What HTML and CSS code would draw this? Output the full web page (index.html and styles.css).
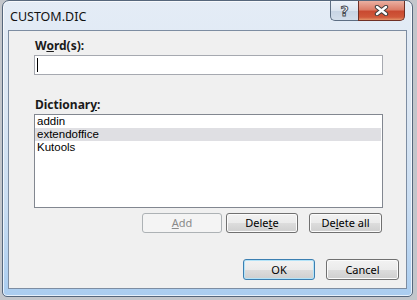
FILE: index.html
```html
<!DOCTYPE html>
<html lang="en">
  <head>
    <meta charset="UTF-8" />
    <title>CUSTOM.DIC</title>
    <link rel="stylesheet" href="styles.css">
  </head>
  <body>
    <div class="window">
      <div class="titlebar">
        <span class="title">CUSTOM.DIC</span>
        <div class="caption">
          <div class="cap help">?</div>
          <div class="cap close">
            <svg width="15" height="11" viewBox="0 0 15 11">
              <path d="M3 2 L12 9 M12 2 L3 9" stroke="#3d3d3d" stroke-width="4.4" stroke-linecap="round" fill="none" />
              <path d="M3 2 L12 9 M12 2 L3 9" stroke="#ffffff" stroke-width="2.4" stroke-linecap="round" fill="none" />
            </svg>
          </div>
        </div>
      </div>
      <div class="panel">
        <div class="label">W<u>o</u>rd(s):</div>
        <div class="textbox"><span class="caret"></span></div>

        <div class="label dict">Dictionar<u>y</u>:</div>
        <ul class="listbox">
          <li>addin</li>
          <li class="selected">extendoffice</li>
          <li>Kutools</li>
        </ul>

        <div class="edit-buttons">
          <div class="btn disabled add"><u>A</u>dd</div>
          <div class="btn del">Dele<u>t</u>e</div>
          <div class="btn delall">De<u>l</u>ete all</div>
        </div>

        <div class="dialog-buttons">
          <div class="btn default ok">OK</div>
          <div class="btn cancel">Cancel</div>
        </div>
      </div>
    </div>
  </body>
</html>
```

FILE: styles.css
```css
* {
  padding: 0;
  margin: 0;
  box-sizing: border-box;
}
body {
  background-color: #c3c6cb;
  font-family: "Noto Sans", "Liberation Sans", sans-serif;
  font-size: 11px;
  color: #000;
}
li {
  list-style: none;
}
u {
  text-decoration-thickness: 1px;
  text-underline-offset: 1px;
}

/* window frame */
.window {
  width: 411px;
  height: 297px;
  margin-left: 2px;
  padding: 0 5px 7px 5px;
  border: 1px solid #56677c;
  border-radius: 7px 7px 5px 5px;
  background: linear-gradient(to bottom, #e4ecf6 0%, #dce7f3 35%, #c9ddf2 70%, #aacdf0 100%);
  box-shadow: inset 0 0 0 1px rgba(255, 255, 255, 0.7);
}
.titlebar {
  display: flex;
  height: 29px;
}
.title {
  padding-left: 2px;
  margin-top: 8px;
  font-size: 12.5px;
  line-height: 16px;
  color: #111;
}
.caption {
  display: flex;
  margin-left: auto;
  margin-right: 2px;
  height: 20px;
}
.cap {
  height: 20px;
  border: 1px solid #5d6e83;
  border-top: none;
  display: flex;
  align-items: center;
  justify-content: center;
}
.help {
  width: 28px;
  border-right: none;
  border-radius: 0 0 0 5px;
  background: linear-gradient(to bottom, #edf2f8 0%, #dbe4ef 50%, #c7d4e4 51%, #d3deeb 100%);
  font-family: "DejaVu Sans", sans-serif;
  font-weight: bold;
  font-size: 14px;
  color: #fff;
  -webkit-text-stroke: 1px #4a4f57;
}
.close {
  width: 47px;
  border-color: #6e2f25;
  border-radius: 0 0 5px 0;
  background: linear-gradient(to bottom, #eab0a2 0%, #dc7e69 45%, #c94a31 55%, #d0583a 85%, #e3946a 100%);
}

/* client area */
.panel {
  height: 259px;
  padding: 8px 7px 0 25px;
  border: 1px solid #7d8da2;
  background-color: #f0f0f0;
}
.label {
  padding-left: 1px;
  font-weight: bold;
  font-size: 12px;
  line-height: 14px;
  color: #1a1a1a;
}
.textbox {
  width: 349px;
  height: 20px;
  margin-top: 2px;
  padding: 2px 0 0 2px;
  border: 1px solid #a6a9b0;
  background-color: #fff;
}
.caret {
  display: block;
  width: 1px;
  height: 14px;
  background-color: #000;
}
.dict {
  margin-top: 23px;
}
.listbox {
  width: 349px;
  height: 94px;
  margin-top: 2px;
  border: 1px solid #828790;
  background-color: #fff;
  font-family: "Liberation Sans", Arial, sans-serif;
  font-size: 11.5px;
}
.listbox li {
  height: 13px;
  line-height: 13px;
  padding-left: 2px;
  margin-right: 1px;
}
.listbox li.selected {
  background-color: #dfdfe3;
}

/* buttons */
.edit-buttons {
  display: flex;
  justify-content: flex-end;
  width: 348px;
  margin-top: 5px;
}
.dialog-buttons {
  display: flex;
  justify-content: flex-end;
  margin-top: 26px;
}
.btn {
  height: 20px;
  line-height: 18px;
  text-align: center;
  border: 1px solid #707070;
  border-radius: 3px;
  background: linear-gradient(to bottom, #f2f2f2 0%, #ebebeb 50%, #dddddd 51%, #cfcfcf 100%);
  box-shadow: inset 0 0 0 1px #fbfbfb;
}
.btn.disabled {
  color: #8a8a8a;
  border-color: #adb2b5;
  background: #f4f4f4;
  box-shadow: none;
}
.btn.default {
  border-color: #3c7fb1;
  box-shadow: inset 0 0 0 1px #b3e3f8;
}
.add {
  width: 80px;
}
.del {
  width: 72px;
  margin-left: 4px;
}
.delall {
  width: 73px;
  margin-left: 11px;
}
.ok {
  width: 72px;
  height: 21px;
  line-height: 19px;
}
.cancel {
  width: 73px;
  height: 21px;
  line-height: 19px;
  margin-left: 11px;
}
```
